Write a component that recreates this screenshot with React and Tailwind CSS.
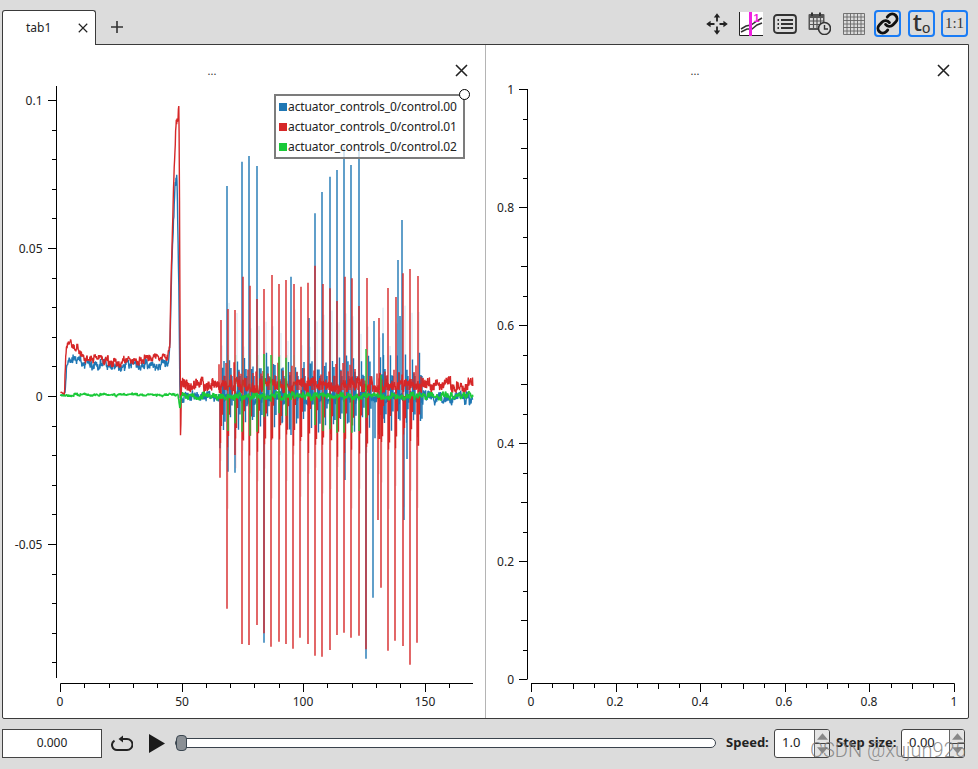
import React from "react";

const FONT = "font-['Noto_Sans','Open_Sans',sans-serif]";
const BLUE = "#1f77b4";
const RED = "#d62728";
const GREEN = "#1ac938";

function rng(seed) {
  let a = seed;
  return () => {
    a |= 0; a = (a + 0x6d2b79f5) | 0;
    let t = Math.imul(a ^ (a >>> 15), 1 | a);
    t = (t + Math.imul(t ^ (t >>> 7), 61 | t)) ^ t;
    return ((t ^ (t >>> 14)) >>> 0) / 4294967296;
  };
}
const lerp = (pts, x) => {
  for (let i = 1; i < pts.length; i++) {
    if (x <= pts[i][0]) {
      const [x0, y0] = pts[i - 1];
      const [x1, y1] = pts[i];
      return y0 + ((y1 - y0) * (x - x0)) / (x1 - x0 || 1);
    }
  }
  return pts[pts.length - 1][1];
};

function baseLine(ctrl, amp, seed, step) {
  const r = rng(seed);
  let d = "";
  let first = true;
  let slow = 0;
  let next = 0;
  for (let x = 60.5; x <= 473; x += step) {
    const a = typeof amp === "function" ? amp(x) : amp;
    if (x >= next) {
      slow = (r() - 0.5) * 2 * a * 0.8;
      next = x + 1.5 + r() * 2;
    }
    const y = lerp(ctrl, x) + slow + (r() - 0.5) * 2 * a * 0.8;
    d += (first ? "M" : "L") + x.toFixed(1) + " " + y.toFixed(1);
    first = false;
  }
  return d;
}

const zx = (X) => Math.round(200 + X / 3);
const upY = (Y) => 80 + Y / 3;
const dnY = (Y) => 370 + Y / 3;

const redDown = [[60,323],[81,716],[104,255],[126,822],[147,825],[170,765],[192,790],[213,830],[236,815],[258,822],[279,836],[300,803],[324,822],[345,857],[366,860],[390,840],[411,795],[432,788],[453,803],[477,797],[498,838],[534,450],[543,653],[564,842],[585,812],[608,828],[630,884],[651,818]];
const redUp = [[63,720],[84,687],[105,690],[129,590],[150,617],[171,657],[192,627],[216,585],[237,612],[258,600],[282,612],[303,620],[324,608],[345,557],[369,612],[390,625],[411,663],[435,590],[456,595],[477,678],[501,594],[537,714],[564,624],[588,651],[609,580],[630,567],[654,588]];
const blueUp = [[81,318],[126,245],[147,228],[170,258],[273,590],[327,714],[345,400],[366,336],[390,290],[411,270],[432,200],[453,255],[477,195],[522,723],[549,760],[594,540],[600,708],[607,420]];
const blueDown = [[60,235],[85,305],[104,308],[192,818],[435,330],[498,866],[519,683],[525,205],[612,450],[620,267],[273,195],[246,160]];
const greenDown = [[84,183],[105,160],[126,185],[150,197],[171,185],[192,140],[213,95],[237,130],[258,137],[345,165],[369,183],[390,178],[411,188],[432,188],[456,188],[477,183],[498,143]];
const greenUp = [[192,822],[213,825],[237,830],[259,833],[498,807],[543,885]];

function spikes() {
  const r = rng(77);
  let red = "", blue = "", green = "", paleB = "", paleR = "", paleG = "";
  redDown.forEach(([X, Y]) => { red += `M${zx(X)} 396V${dnY(Y).toFixed(1)}`; });
  redUp.forEach(([X, Y]) => { red += `M${zx(X)} 396V${upY(Y).toFixed(1)}`; });
  blueUp.forEach(([X, Y]) => { blue += `M${zx(X)} 396V${upY(Y).toFixed(1)}`; });
  blueDown.forEach(([X, Y]) => { blue += `M${zx(X)} 396V${dnY(Y).toFixed(1)}`; });
  greenDown.forEach(([X, Y]) => { green += `M${zx(X)} 396V${dnY(Y).toFixed(1)}`; });
  greenUp.forEach(([X, Y]) => { green += `M${zx(X)} 396V${upY(Y).toFixed(1)}`; });
  redDown.forEach(([X]) => {
    const x = zx(X);
    if (x > 420) return;
    const d1 = 432 + r() * 26;
    red += `M${x + 0.5} 396V${d1.toFixed(1)}`;
    red += `M${x + 1.5} 396V${(425 + r() * 22).toFixed(1)}`;
    red += `M${x + 2.5} 396V${(405 + r() * 14).toFixed(1)}`;
    red += `M${x + 4} 390V${(368 + r() * 16).toFixed(1)}`;
    red += `M${x - 1} 390V${(362 + r() * 20).toFixed(1)}`;
    blue += `M${x + 3.5} 380V${(415 + r() * 18).toFixed(1)}`;
    blue += `M${x + 5} 376V${(404 + r() * 20).toFixed(1)}`;
    blue += `M${x + 2.5} 396V${(352 + r() * 20).toFixed(1)}`;
    blue += `M${x + 4} 396V${(360 + r() * 16).toFixed(1)}`;
    paleR += `M${x + 1} 396V${(450 + r() * 60).toFixed(1)}`;
    paleB += `M${x + 2} 396V${(300 + r() * 50).toFixed(1)}`;
    if (x > 225 && x < 295) paleG += `M${x + 1} 355V${(415 + r() * 15).toFixed(1)}`;
  });
  return { red, blue, green, paleB, paleR, paleG };
}

const redCtrl = [[60.5,393],[64.5,393],[66,350],[68,342],[70,338],[73,345],[85,357],[115,362],[150,359],[168,355],[170,345],[171,280],[174,173],[176,123],[178,118],[179,99],[180,300],[180.5,441],[181.5,385],[220,385.5],[420,385.5],[473,385.5]];
const blueCtrl = [[60.5,395],[65,395],[67,362],[72,358],[80,362],[100,365],[150,364],[168,366],[170,340],[172,260],[175,190],[177,175],[179,300],[180,402],[182,398],[473,398]];
const greenCtrl = [[60.5,395],[178,395],[180,408],[181,396],[473,396]];

const greenAmp = (x) => (x < 180 ? 1.4 : 3.2);
const redAmp = (x) => (x < 64 ? 0.6 : x < 180 ? 4.2 : 6);
const blueAmp = (x) => (x < 64 ? 0.5 : x < 180 ? 4.6 : 5);

function Ticks({ list, stroke = "#000" }) {
  return (
    <path d={list.join("")} stroke={stroke} strokeWidth="1" fill="none" />
  );
}

const AXIS_FONT = { fontFamily: "'Noto Sans','Open Sans',sans-serif", fontSize: 12, fill: "#222" };

function LeftChart() {
  const s = spikes();
  const yt = [];
  for (let i = -9; i <= 10; i++) {
    const y = Math.round(396 - i * 29.6) + 0.5;
    yt.push(`M${i % 5 === 0 ? 48 : 52} ${y}H56.5`);
  }
  const xt = [];
  for (let v = 0; v <= 160; v += 10) {
    const x = Math.round(60 + v * 2.43) + 0.5;
    xt.push(`M${x} 683.5V${v % 50 === 0 ? 692 : 688}`);
  }
  return (
    <svg className="block w-[482px] h-[632px] overflow-visible" viewBox="3 85 482 632">
      <Ticks list={["M56.5 86V678", "M60.5 683.5H473", ...yt, ...xt]} />
      {[["0.1", 100.5], ["0.05", 248.5], ["0", 396.5], ["-0.05", 544.5]].map(([t, y]) => (
        <text key={t} x="42.5" y={y + 4} textAnchor="end" style={AXIS_FONT}>{t}</text>
      ))}
      {[["0", 60], ["50", 182], ["100", 303], ["150", 425]].map(([t, x]) => (
        <text key={t} x={x} y="706" textAnchor="middle" style={AXIS_FONT}>{t}</text>
      ))}
      <g fill="none" strokeLinejoin="bevel">
        <path d={s.paleB} stroke={BLUE} strokeWidth="1" opacity="0.2" />
        <path d={baseLine(blueCtrl, blueAmp, 11, 0.35)} stroke={BLUE} strokeWidth="1.4" />
        <path d={s.blue} stroke={BLUE} strokeWidth="1.4" />
        <path d={s.paleR} stroke={RED} strokeWidth="1" opacity="0.2" />
        <path d={baseLine(redCtrl, redAmp, 23, 0.35)} stroke={RED} strokeWidth="1.4" />
        <path d={s.red} stroke={RED} strokeWidth="1.4" />
        <path d={s.paleG} stroke={GREEN} strokeWidth="1" opacity="0.2" />
        <path d={baseLine(greenCtrl, greenAmp, 5, 0.35)} stroke={GREEN} strokeWidth="1.6" />
        <path d={s.green} stroke={GREEN} strokeWidth="1.4" />
      </g>
    </svg>
  );
}

function RightChart() {
  const yt = [];
  for (let i = 0; i <= 20; i++) {
    const y = Math.round(679 - i * 29.5) + 0.5;
    yt.push(`M${i % 4 === 0 ? 519 : i % 2 === 0 ? 521 : 523} ${y}H527.5`);
  }
  const xt = [];
  for (let i = 0; i <= 20; i++) {
    const x = Math.round(531 + i * 21.15) + 0.5;
    xt.push(`M${x} 683.5V${i % 4 === 0 ? 692 : i % 2 === 0 ? 689 : 688}`);
  }
  return (
    <svg className="block w-[482px] h-[632px] overflow-visible" viewBox="486 85 482 632">
      <Ticks list={["M527.5 89V679", "M531 683.5H954.5", ...yt, ...xt]} />
      {[["1", 89.5], ["0.8", 207.5], ["0.6", 325.5], ["0.4", 443.5], ["0.2", 561.5], ["0", 679.5]].map(([t, y]) => (
        <text key={t} x="514" y={y + 4} textAnchor="end" style={AXIS_FONT}>{t}</text>
      ))}
      {[["0", 531], ["0.2", 615], ["0.4", 700], ["0.6", 784], ["0.8", 869], ["1", 954]].map(([t, x]) => (
        <text key={t} x={x} y="706" textAnchor="middle" style={AXIS_FONT}>{t}</text>
      ))}
    </svg>
  );
}

function CloseX({ size = 13, w = 1.6 }) {
  return (
    <svg width={size} height={size} viewBox="0 0 13 13" className="block">
      <path d="M1 1L12 12M12 1L1 12" stroke="#222" strokeWidth={w} fill="none" />
    </svg>
  );
}

function PaneHeader({ pad }) {
  return (
    <div className="flex h-[40px] items-center">
      <div className="flex-1 flex justify-center pt-[10px] text-[11px] leading-none text-[#333]">...</div>
      <div className={`w-[64px] ${pad} pt-[11px]`}><CloseX /></div>
    </div>
  );
}

function Legend() {
  const rows = [
    [BLUE, "actuator_controls_0/control.00"],
    [RED, "actuator_controls_0/control.01"],
    [GREEN, "actuator_controls_0/control.02"],
  ];
  return (
    <div className="absolute left-[271px] top-[49px] w-[191px] h-[65px] border-2 border-[#7c7c7c] bg-white/75 flex flex-col justify-center">
      {rows.map(([c, t]) => (
        <div key={t} className="flex items-center h-[20px] pl-[3px]">
          <span className="w-[8px] h-[8px] shrink-0" style={{ background: c }} />
          <span className="ml-[1px] text-[12px] leading-none tracking-[-0.1px] text-[#222] whitespace-nowrap">{t}</span>
        </div>
      ))}
      <span className="absolute right-[-7px] top-[-7px] w-[11px] h-[11px] rounded-full bg-white border border-black" />
    </div>
  );
}

function MoveIcon() {
  return (
    <svg width="24" height="24" viewBox="0 0 24 24" className="block">
      <path d="M12 5V9.5M12 14.5V19M5 12H9.5M14.5 12H19" stroke="#222" strokeWidth="1.8" />
      <path d="M12 1.2L8.8 5.6H15.2ZM12 22.8L8.8 18.4H15.2ZM1.2 12L5.6 8.8V15.2ZM22.8 12L18.4 8.8V15.2Z" fill="#222" />
    </svg>
  );
}

function PlotIcon() {
  return (
    <svg width="24" height="24" viewBox="0 0 24 24" className="block">
      <rect width="24" height="24" fill="#fff" />
      <path d="M0.5 0V23.5H24" stroke="#222" strokeWidth="1" fill="none" />
      <path d="M2 20L8 17L13 17L18 13L23 11" stroke="#333" strokeWidth="1.5" fill="none" />
      <path d="M2 17L7 14L12 13L18 9L23 6" stroke="#333" strokeWidth="1.5" fill="none" />
      <rect x="10" y="0" width="3" height="24" fill="#f020e0" />
      <text x="14.5" y="9.5" style={{ fontFamily: "'Liberation Sans',sans-serif", fontSize: 11, fontWeight: 700, fill: "#f020e0" }}>1</text>
    </svg>
  );
}

function ListIcon() {
  return (
    <svg width="24" height="20" viewBox="0 0 24 20" className="block">
      <rect x="1" y="1" width="22" height="18" rx="3" fill="none" stroke="#333" strokeWidth="1.8" />
      <path d="M8 6H20M8 10H20M8 14H20" stroke="#333" strokeWidth="2" />
      <path d="M4.5 6H6M4.5 10H6M4.5 14H6" stroke="#333" strokeWidth="2" />
    </svg>
  );
}

function CalIcon() {
  return (
    <svg width="23" height="23" viewBox="0 0 23 23" className="block">
      <rect x="0.5" y="2" width="16" height="16" rx="1" fill="#555" />
      <path d="M4 0.5V4M12 0.5V4" stroke="#333" strokeWidth="2" />
      <rect x="2" y="6" width="13" height="10" fill="#ddd" />
      <path d="M2 9H15M2 12.5H15M5.5 6V16M9 6V16M12.5 6V16" stroke="#555" strokeWidth="1.2" />
      <circle cx="16.5" cy="16.5" r="6" fill="#dcdcdc" stroke="#333" strokeWidth="1.6" />
      <path d="M16.5 13V17H20" stroke="#333" strokeWidth="1.4" fill="none" />
    </svg>
  );
}

function GridIcon() {
  const p = [];
  for (let i = 0; i <= 6; i++) {
    const v = 0.5 + i * 3.5;
    p.push(`M${v} 0.5V21.5M0.5 ${v}H21.5`);
  }
  return (
    <svg width="22" height="22" viewBox="0 0 22 22" className="block">
      <path d={p.join("")} stroke="#666" strokeWidth="0.9" fill="none" />
    </svg>
  );
}

function LinkIcon() {
  return (
    <svg width="23" height="23" viewBox="0 0 24 24" className="block" fill="none" stroke="#111" strokeWidth="3" strokeLinecap="round" strokeLinejoin="round">
      <path d="M10 13a5 5 0 0 0 7.54.54l3-3a5 5 0 0 0-7.07-7.07l-1.72 1.71" />
      <path d="M14 11a5 5 0 0 0-7.54-.54l-3 3a5 5 0 0 0 7.07 7.07l1.71-1.71" />
    </svg>
  );
}

function BlueBox({ children }) {
  return (
    <div className="w-[27px] h-[27px] rounded-[4px] border-2 border-[#1a7cf5] flex items-center justify-center">
      {children}
    </div>
  );
}

function Spin({ w, label }) {
  return (
    <div className={`${w} h-[29px] flex rounded-[3px] border border-[#444] bg-white overflow-hidden`}>
      <div className="flex-1 flex items-center pl-[7px] text-[13px] text-[#222]">{label}</div>
      <div className="w-[15px] bg-[#e4e4e4] border-l border-[#666] flex flex-col">
        <div className="flex-1 flex items-center justify-center border-b border-[#444]">
          <svg width="11" height="7" viewBox="0 0 10 6" className="block"><path d="M5 0L10 6H0Z" fill="#888" /></svg>
        </div>
        <div className="flex-1 flex items-center justify-center">
          <svg width="11" height="7" viewBox="0 0 10 6" className="block"><path d="M5 6L10 0H0Z" fill="#888" /></svg>
        </div>
      </div>
    </div>
  );
}

export default function App() {
  return (
    <div className={`relative w-[978px] h-[769px] overflow-hidden bg-[#dcdcdc] flex flex-col ${FONT}`}>
      <div className="flex h-[44px] shrink-0 items-end pl-[2px] pr-[10px]">
        <div className="relative z-10 mb-[-1px] w-[94px] h-[35px] bg-white border border-b-0 border-[#3a3a3a] rounded-t-[3px] flex items-center pl-[23px] text-[12px] text-[#222]">
          <span>tab1</span>
          <span className="ml-[27px]"><CloseX size={10} w={1.5} /></span>
        </div>
        <div className="ml-[15px] mb-[11px]">
          <svg width="12" height="12" viewBox="0 0 12 12" className="block"><path d="M6 0V12M0 6H12" stroke="#333" strokeWidth="1.6" /></svg>
        </div>
        <div className="ml-auto flex items-center h-[44px] pt-[3px]">
          <MoveIcon />
          <div className="ml-[10px]"><PlotIcon /></div>
          <div className="ml-[10px]"><ListIcon /></div>
          <div className="ml-[11px]"><CalIcon /></div>
          <div className="ml-[12px]"><GridIcon /></div>
          <div className="ml-[9px]"><BlueBox><LinkIcon /></BlueBox></div>
          <div className="ml-[7px]">
            <BlueBox>
              <span className="text-[24px] leading-none text-[#333] font-medium font-['Noto_Sans',sans-serif] mt-[-3px]">t</span>
              <span className="text-[15px] leading-none text-[#333] mt-[8px] font-['Liberation_Sans',sans-serif]">o</span>
            </BlueBox>
          </div>
          <div className="ml-[6px]">
            <BlueBox>
              <span className="text-[15px] leading-none text-[#333] font-['Liberation_Serif',serif]">1:1</span>
            </BlueBox>
          </div>
        </div>
      </div>

      <div className="ml-[2px] w-[967px] h-[675px] shrink-0 bg-white border border-[#3a3a3a] rounded-b-[2px] flex">
        <div className="relative w-[482px]">
          <PaneHeader pad="pl-[34px]" />
          <LeftChart />
          <Legend />
        </div>
        <div className="w-[1px] bg-[#b4b4b4]" />
        <div className="relative w-[482px]">
          <PaneHeader pad="pl-[33px]" />
          <RightChart />
        </div>
      </div>

      <div className="flex flex-1 items-center pl-[2px] pb-[2px]">
        <div className="w-[100px] h-[29px] bg-white border border-[#444] flex items-center justify-center text-[12px] text-[#222]">0.000</div>
        <div className="ml-[9px]">
          <svg width="22" height="16" viewBox="0 0 22 16" className="block" fill="none" stroke="#222" strokeWidth="2">
            <path d="M11 4H16a5 5 0 0 1 0 11H6a5 5 0 0 1-2.5-9.3" />
            <path d="M7.5 4L12 0.5V7.5Z" fill="#222" stroke="none" />
          </svg>
        </div>
        <div className="ml-[16px]">
          <svg width="16" height="19" viewBox="0 0 16 19" className="block"><path d="M0 0L16 9.5L0 19Z" fill="#1a1a1a" /></svg>
        </div>
        <div className="relative ml-[10px] w-[541px] h-[10px] rounded-full bg-white border border-[#3a434c]">
          <span className="absolute left-[0px] top-[-4px] w-[11px] h-[16px] rounded-[4px] bg-[#8b9095] border border-[#3a4650]" />
        </div>
        <div className="ml-[10px] w-[46px] text-[13px] font-bold text-[#222] whitespace-nowrap">Speed:</div>
        <div className="ml-[2px]"><Spin w="w-[56px]" label="1.0" /></div>
        <div className="ml-[6px] w-[62px] text-[13px] font-bold text-[#222] whitespace-nowrap">Step size:</div>
        <div className="ml-[3px]"><Spin w="w-[64px]" label="0.00" /></div>
      </div>

      <div className="absolute left-[810px] top-[737px] text-[20px] leading-[26px] text-[#777]/80 whitespace-nowrap font-['Roboto',sans-serif] font-light">CSDN @xujun925</div>
    </div>
  );
}
